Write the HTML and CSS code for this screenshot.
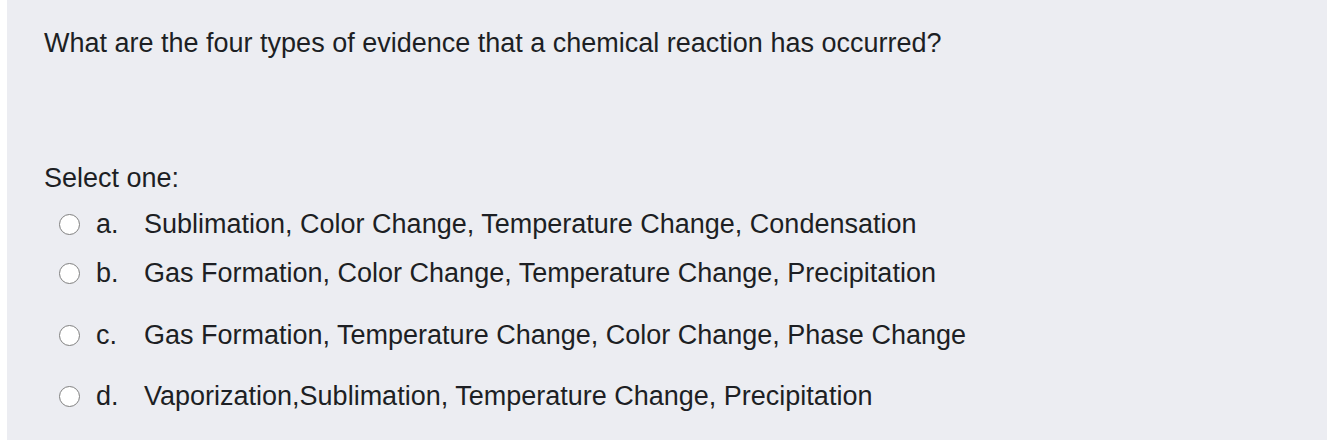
FILE: index.html
```html
<!DOCTYPE html>
<html>
<head>
<meta charset="utf-8">
<link rel="stylesheet" href="styles.css">
</head>
<body>
<div class="panel">
  <div class="qtext">What are the four types of evidence that a chemical reaction has occurred?</div>
  <div class="prompt">Select one:</div>
  <div class="answers">
    <div class="opt opt-a"><span class="radio"></span><span class="letter">a.</span><span class="label">Sublimation, Color Change, Temperature Change, Condensation</span></div>
    <div class="opt opt-b"><span class="radio"></span><span class="letter">b.</span><span class="label">Gas Formation, Color Change, Temperature Change, Precipitation</span></div>
    <div class="opt opt-c"><span class="radio"></span><span class="letter">c.</span><span class="label">Gas Formation, Temperature Change, Color Change, Phase Change</span></div>
    <div class="opt opt-d"><span class="radio"></span><span class="letter">d.</span><span class="label">Vaporization,Sublimation, Temperature Change, Precipitation</span></div>
  </div>
</div>
</body>
</html>
```
FILE: styles.css
```css
html, body { margin: 0; padding: 0; background: #fff; }
body { padding-left: 7px; }
.panel {
  background: #ecedf2;
  height: 440px;
  box-sizing: border-box;
  padding: 25px 0 0 37px;
  font-family: "Liberation Sans", Arial, sans-serif;
  color: #1d1f24;
  font-size: 27px;
}
.qtext { line-height: 36px; }
.prompt { margin-top: 99px; line-height: 36px; }
.answers { margin-top: 10px; padding-left: 15px; }
.opt { display: flex; align-items: center; height: 36px; }
.opt-b { margin-top: 13px; }
.opt-c { margin-top: 26px; }
.opt-d { margin-top: 25px; }
.radio {
  width: 19px; height: 19px;
  border: 1.5px solid #808080;
  border-radius: 50%;
  background: #fff;
  flex: none;
}
.letter { margin-left: 16px; width: 48px; }
```
